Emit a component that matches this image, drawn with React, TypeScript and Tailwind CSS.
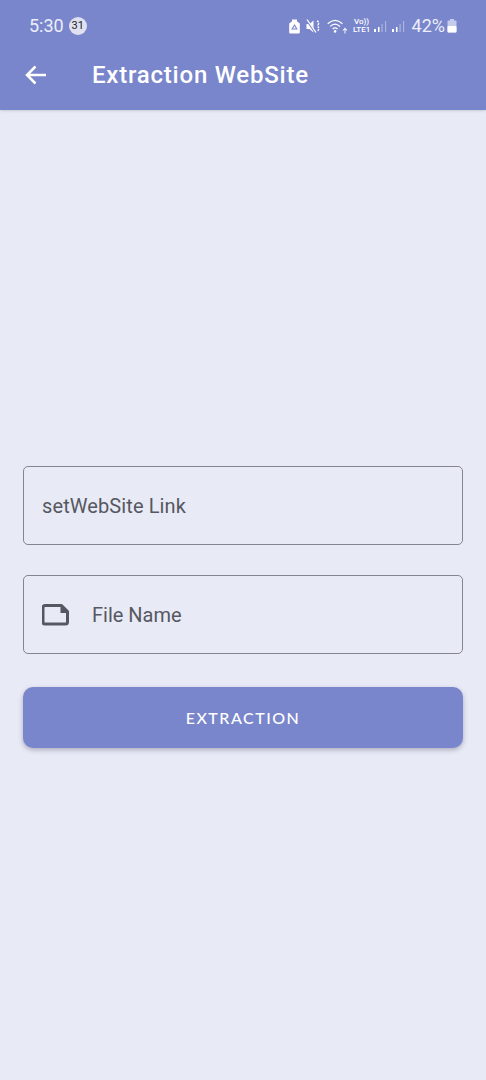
const roboto = { fontFamily: 'Roboto, "Liberation Sans", sans-serif' }

function StatusIcons() {
  return (
    <div className="flex items-center text-white">
      {/* alarm/backup icon */}
      <svg width="11" height="15" viewBox="0 0 11 15">
        <path d="M3 0.500h5v2l2.300 1.500a1 1 0 0 1 .5 1v8.500a1 1 0 0 1-1 1H1.200a1 1 0 0 1-1-1V5a1 1 0 0 1 .5-1L3 2.500z" fill="#fff" />
        <path d="M5.500 6l2.300 4H3.200z" fill="none" stroke="#7986cb" strokeWidth="1.100" />
      </svg>
      {/* muted */}
      <svg width="16" height="15" viewBox="0 0 16 15" className="ml-[6px]">
        <path d="M0.500 5h3l4-3.500v12l-4-3.500h-3z" fill="#fff" />
        <path d="M1 1.500l9 13" stroke="#7986cb" strokeWidth="2" />
        <path d="M1 0.500l9 13" stroke="#fff" strokeWidth="1.300" />
        <path d="M11 2q2.500 1 1.500 3t0 3.500q1 2-1.500 4" fill="none" stroke="#fff" strokeWidth="1.400" strokeDasharray="2 1" />
      </svg>
      {/* wifi */}
      <svg width="21" height="15" viewBox="0 0 21 15" className="ml-[5px]">
        <path d="M0.700 4.800Q8-2 15.500 4.800" fill="none" stroke="#fff" strokeWidth="1.300" />
        <path d="M3.200 7.400Q8 2.800 13 7.400" fill="none" stroke="#fff" strokeWidth="1.300" />
        <path d="M5.700 10Q8 7.800 10.500 10" fill="none" stroke="#fff" strokeWidth="1.300" />
        <circle cx="8.100" cy="12.400" r="1.300" fill="#fff" />
        <path d="M18 14.500v-5M16 11.500l2-2.200 2 2.200" fill="none" stroke="#eef0fa" strokeWidth="1.100" />
      </svg>
      <div className="ml-[5px] flex w-[18px] flex-col items-center text-[8px] leading-[8px] font-medium" style={roboto}>
        <span>Vo))</span>
        <span>LTE1</span>
      </div>
      {/* signal */}
      <svg width="15" height="13" viewBox="0 0 15 13" className="ml-[2px]">
        <rect x="1" y="9" width="2" height="3" fill="#fff" />
        <rect x="5" y="7" width="1.500" height="5" fill="#fff" />
        <rect x="8.500" y="4" width="1.200" height="8" fill="#aab3e0" />
        <rect x="12" y="1" width="1.200" height="11" fill="#aab3e0" />
      </svg>
      <svg width="15" height="13" viewBox="0 0 15 13" className="ml-[3px]">
        <rect x="1" y="9" width="2" height="3" fill="#fff" />
        <rect x="5" y="7" width="1.500" height="5" fill="#fff" />
        <rect x="8.500" y="4" width="1.200" height="8" fill="#aab3e0" />
        <rect x="12" y="1" width="1.200" height="11" fill="#aab3e0" />
      </svg>
      <span className="ml-[6px] text-[18px] leading-none text-[#eceefa]">42%</span>
      <svg width="10" height="14" viewBox="0 0 10 14" className="ml-[2px]">
        <rect x="3" y="0" width="4" height="2" fill="#c5cbea" />
        <rect x="0.500" y="1.500" width="9" height="12" rx="1" fill="#c5cbea" />
        <rect x="0.500" y="7" width="9" height="6.500" rx="1" fill="#fff" />
      </svg>
    </div>
  )
}

export default function App() {
  return (
    <div className="flex h-[1080px] w-full flex-col bg-[#e8eaf6]" style={roboto}>
      <header className="h-[110px] bg-[#7986cb] shadow-sm">
        <div className="flex h-[52px] items-center justify-between pr-[29px] pl-[29px]">
          <div className="flex items-center gap-[5px]">
            <span className="text-[18px] leading-none text-[#eceefa]">5:30</span>
            <span className="flex h-[18px] w-[18px] items-center justify-center rounded-full bg-[#dfe1f1] text-[11px] text-[#222]">
              31
            </span>
          </div>
          <StatusIcons />
        </div>
        <div className="flex h-[46px] items-center pl-[24px]">
          <svg width="24" height="24" viewBox="0 0 24 24" fill="none" stroke="#fff" strokeWidth="2.500">
            <path d="M22 12H3.500M11.500 3.500L3 12l8.500 8.500" />
          </svg>
          <h1 className="ml-[44px] text-[24px] leading-none font-medium tracking-[0.78px] text-white">Extraction WebSite</h1>
        </div>
      </header>

      <main className="flex flex-col px-[23px] pt-[356px]">
        <div className="flex h-[79px] items-center rounded-[5px] border border-[#85868f] pl-[18px] text-[20px] tracking-[0.1px] text-[#565861]">
          setWebSite Link
        </div>
        <div className="mt-[30px] flex h-[79px] items-center rounded-[5px] border border-[#85868f] pl-[18px] text-[20px] text-[#565861]">
          <svg width="27" height="22" viewBox="0 0 27 22" fill="none">
            <path d="M3 1.500h16.500l6 6v10.500a2 2 0 0 1-2 2H3a2 2 0 0 1-2-2V3.500a2 2 0 0 1 2-2z" stroke="#565861" strokeWidth="3" strokeLinejoin="round" />
            <path d="M18.500 1.500h2l5 5v2.500h-7z" fill="#565861" />
          </svg>
          <span className="ml-[23px]">File Name</span>
        </div>
        <button
          className="mt-[33px] flex h-[61px] items-center justify-center rounded-[10px] bg-[#7986cb] text-[16px] font-medium tracking-[1.5px] text-white shadow-[0_2px_5px_rgba(60,60,90,0.35)]"
          style={{ fontFamily: 'Lato, sans-serif' }}
        >
          EXTRACTION
        </button>
      </main>
    </div>
  )
}
